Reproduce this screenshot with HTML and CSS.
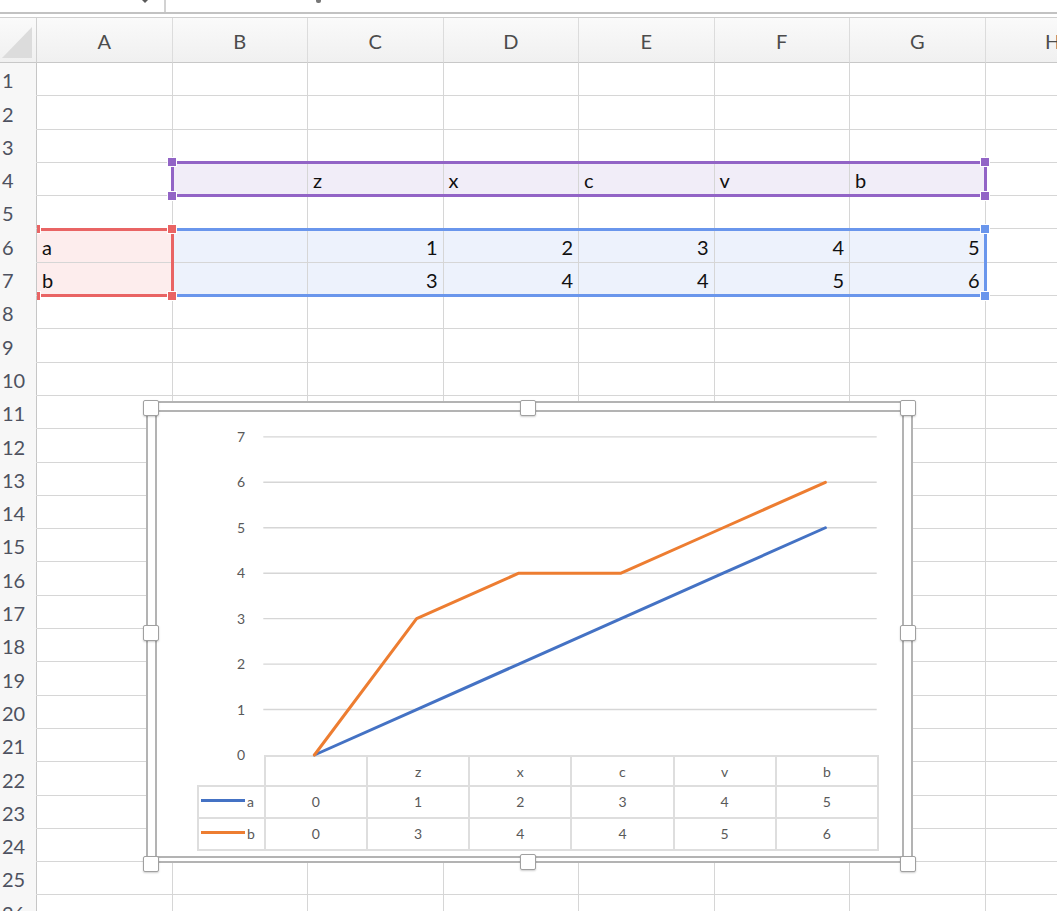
FILE: index.html
```html
<!DOCTYPE html>
<html lang="en">

<head>
    <meta charset="UTF-8">
    <meta name="viewport" content="width=device-width, initial-scale=1.0">
    <title>Sheet1 - Chart</title>
    <link rel="stylesheet" href="styles.css">
</head>

<body>
    <div class="toolbar">
        <div class="namebox"><span class="drop"></span></div>
        <div class="formula"><span class="fx"></span></div>
    </div>

    <div class="sheet">
        <div class="grid">
            <div class="corner"><span class="tri"></span></div><div class="ch">A</div><div class="ch">B</div><div class="ch">C</div><div class="ch">D</div><div class="ch">E</div><div class="ch">F</div><div class="ch">G</div><div class="ch">H</div>
            <div class="rh">1</div><div></div><div></div><div></div><div></div><div></div><div></div><div></div><div></div>
            <div class="rh">2</div><div></div><div></div><div></div><div></div><div></div><div></div><div></div><div></div>
            <div class="rh">3</div><div></div><div></div><div></div><div></div><div></div><div></div><div></div><div></div>
            <div class="rh">4</div><div></div><div class="fp"></div><div class="fp">z</div><div class="fp">x</div><div class="fp">c</div><div class="fp">v</div><div class="fp">b</div><div></div>
            <div class="rh">5</div><div></div><div></div><div></div><div></div><div></div><div></div><div></div><div></div>
            <div class="rh">6</div><div class="fr">a</div><div class="fb"></div><div class="fb n">1</div><div class="fb n">2</div><div class="fb n">3</div><div class="fb n">4</div><div class="fb n">5</div><div></div>
            <div class="rh">7</div><div class="fr">b</div><div class="fb"></div><div class="fb n">3</div><div class="fb n">4</div><div class="fb n">4</div><div class="fb n">5</div><div class="fb n">6</div><div></div>
            <div class="rh">8</div><div></div><div></div><div></div><div></div><div></div><div></div><div></div><div></div>
            <div class="rh">9</div><div></div><div></div><div></div><div></div><div></div><div></div><div></div><div></div>
            <div class="rh">10</div><div></div><div></div><div></div><div></div><div></div><div></div><div></div><div></div>
            <div class="rh">11</div><div></div><div></div><div></div><div></div><div></div><div></div><div></div><div></div>
            <div class="rh">12</div><div></div><div></div><div></div><div></div><div></div><div></div><div></div><div></div>
            <div class="rh">13</div><div></div><div></div><div></div><div></div><div></div><div></div><div></div><div></div>
            <div class="rh">14</div><div></div><div></div><div></div><div></div><div></div><div></div><div></div><div></div>
            <div class="rh">15</div><div></div><div></div><div></div><div></div><div></div><div></div><div></div><div></div>
            <div class="rh">16</div><div></div><div></div><div></div><div></div><div></div><div></div><div></div><div></div>
            <div class="rh">17</div><div></div><div></div><div></div><div></div><div></div><div></div><div></div><div></div>
            <div class="rh">18</div><div></div><div></div><div></div><div></div><div></div><div></div><div></div><div></div>
            <div class="rh">19</div><div></div><div></div><div></div><div></div><div></div><div></div><div></div><div></div>
            <div class="rh">20</div><div></div><div></div><div></div><div></div><div></div><div></div><div></div><div></div>
            <div class="rh">21</div><div></div><div></div><div></div><div></div><div></div><div></div><div></div><div></div>
            <div class="rh">22</div><div></div><div></div><div></div><div></div><div></div><div></div><div></div><div></div>
            <div class="rh">23</div><div></div><div></div><div></div><div></div><div></div><div></div><div></div><div></div>
            <div class="rh">24</div><div></div><div></div><div></div><div></div><div></div><div></div><div></div><div></div>
            <div class="rh">25</div><div></div><div></div><div></div><div></div><div></div><div></div><div></div><div></div>
            <div class="rh">26</div><div></div><div></div><div></div><div></div><div></div><div></div><div></div><div></div>
        </div>

        <!-- range highlights for the chart source -->
        <div class="ranges">
            <div class="rng purple" style="left: 133.5px; top: 97.9px; width: 816px; height: 36.3px;">
                <span class="hd tl"></span><span class="hd tr"></span><span class="hd bl"></span><span class="hd br"></span>
            </div>
            <div class="rng blue" style="left: 133.5px; top: 164.5px; width: 816px; height: 69.6px;">
                <span class="hd tr"></span><span class="hd br"></span>
            </div>
            <div class="rng red" style="left: -3px; top: 164.5px; width: 139.5px; height: 69.6px;">
                <span class="hd tl"></span><span class="hd tr"></span><span class="hd bl"></span><span class="hd br"></span>
            </div>
        </div>

        <div class="chart">
            <div class="chart-body">
                <svg class="plot" width="745" height="343" viewBox="0 0 745 343">
                    <g class="gridlines">
                        <line x1="106.3" y1="297.55" x2="719.7" y2="297.55" />
                        <line x1="106.3" y1="252.1" x2="719.7" y2="252.1" />
                        <line x1="106.3" y1="206.65" x2="719.7" y2="206.65" />
                        <line x1="106.3" y1="161.2" x2="719.7" y2="161.2" />
                        <line x1="106.3" y1="115.75" x2="719.7" y2="115.75" />
                        <line x1="106.3" y1="70.3" x2="719.7" y2="70.3" />
                        <line x1="106.3" y1="24.85" x2="719.7" y2="24.85" />
                    </g>
                    <g class="ax">
                        <text x="84" y="348">0</text>
                        <text x="84" y="302.5">1</text>
                        <text x="84" y="257">2</text>
                        <text x="84" y="211.5">3</text>
                        <text x="84" y="166">4</text>
                        <text x="84" y="120.5">5</text>
                        <text x="84" y="75">6</text>
                        <text x="84" y="29.5">7</text>
                    </g>
                    <polyline class="series-a" points="157.4,343 259.6,297.55 361.8,252.1 464,206.65 566.2,161.2 668.4,115.75" />
                    <polyline class="series-b" points="157.4,343 259.6,206.65 361.8,161.2 464,161.2 566.2,115.75 668.4,70.3" />
                </svg>
                <table class="dt">
                    <colgroup>
                        <col class="c-key"><col><col><col><col><col><col>
                    </colgroup>
                    <tr class="r-head">
                        <td class="blank"></td><td></td><td>z</td><td>x</td><td>c</td><td>v</td><td>b</td>
                    </tr>
                    <tr class="r-a">
                        <td class="key"><span class="swatch blue"></span>a</td><td>0</td><td>1</td><td>2</td><td>3</td><td>4</td><td>5</td>
                    </tr>
                    <tr class="r-b">
                        <td class="key"><span class="swatch orange"></span>b</td><td>0</td><td>3</td><td>4</td><td>4</td><td>5</td><td>6</td>
                    </tr>
                </table>
            </div>
            <span class="ho" style="left: -5.5px; top: -3.5px;"></span>
            <span class="ho" style="left: 372px; top: -3.5px;"></span>
            <span class="ho" style="left: 752px; top: -3.5px;"></span>
            <span class="ho" style="left: -5.5px; top: 222px;"></span>
            <span class="ho" style="left: 752px; top: 222px;"></span>
            <span class="ho" style="left: -5.5px; top: 453px;"></span>
            <span class="ho" style="left: 372px; top: 451px;"></span>
            <span class="ho" style="left: 752px; top: 453px;"></span>
        </div>
    </div>
</body>

</html>
```

FILE: styles.css
```css
* {
    margin: 0;
    padding: 0;
    box-sizing: border-box;
}

html,
body {
    overflow: hidden;
    background: #fff;
    font-family: Lato, "Open Sans", sans-serif;
}

/* top strip (name box + formula bar, cut off) */
.toolbar {
    display: flex;
    height: 14px;
    border-bottom: 2px solid #c2c2c2;
}

.namebox {
    display: flex;
    width: 166px;
    border-right: 2px solid #d2d2d2;
}

.drop {
    margin-left: auto;
    margin-right: 16px;
    width: 0;
    height: 0;
    border-top: 3px solid #5a5a5a;
    border-left: 3px solid transparent;
    border-right: 3px solid transparent;
}

.formula {
    flex: 1;
}

.fx {
    display: block;
    margin-left: 150px;
    width: 5px;
    height: 3px;
    background: #777;
    border-radius: 0 0 2px 2px;
}

/* sheet */
.sheet {
    position: relative;
    margin-top: 3px;
    border-top: 1px solid #cfcfcf;
}

.grid {
    display: grid;
    grid-template-columns: 37px repeat(8, 135.5px);
    grid-template-rows: 45px repeat(26, 33.3px);
    font-size: 20px;
}

.grid > div {
    display: flex;
    align-items: flex-end;
    padding: 0 5px 3px;
    border-right: 1px solid #d6d6d6;
    border-bottom: 1px solid #d6d6d6;
    color: #111;
    white-space: nowrap;
    overflow: hidden;
}

.grid > .n {
    justify-content: flex-end;
}

.grid > .corner {
    position: relative;
    padding: 0;
    background: linear-gradient(#fafafa, #f0f0f0);
    border-bottom-color: #c8c8c8;
    border-right-color: #d0d0d0;
}

.tri {
    position: absolute;
    left: 2px;
    top: 9px;
    width: 30px;
    height: 31px;
    background: #dcdcdc;
    clip-path: polygon(100% 0, 100% 100%, 0 100%);
}

.grid > .ch {
    align-items: center;
    justify-content: center;
    padding: 2px 0 0;
    background: linear-gradient(#fafafa, #f0f0f0);
    border-right-color: #dcdcdc;
    border-bottom-color: #c8c8c8;
    color: #4c4c4c;
}

.grid > .rh {
    padding: 0 0 3px 2px;
    background: #f7f7f7;
    border-right-color: #c6c6c6;
    border-bottom-color: #f7f7f7;
    color: #4e5260;
}

.grid > .fp {
    background: #f1edf8;
}

.grid > .fr {
    background: #fdeded;
}

.grid > .fb {
    background: #edf2fc;
}

/* coloured range borders */
.ranges {
    position: absolute;
    left: 37px;
    top: 45px;
    right: 0;
    bottom: 0;
    overflow: hidden;
    pointer-events: none;
}

.rng {
    position: absolute;
    border: 3px solid currentColor;
}

.purple {
    color: #9264c6;
}

.blue {
    color: #6a96ec;
}

.red {
    color: #e96464;
}

.hd {
    position: absolute;
    width: 10px;
    height: 10px;
    border: 1px solid #fff;
    background: currentColor;
}

.hd.tl { left: -6.5px; top: -6.5px; }
.hd.tr { right: -6.5px; top: -6.5px; }
.hd.bl { left: -6.5px; bottom: -6.5px; }
.hd.br { right: -6.5px; bottom: -6.5px; }

/* chart object */
.chart {
    position: absolute;
    left: 146px;
    top: 383px;
    width: 767px;
    height: 462px;
    padding: 7px 7px 3px;
    border: 2px solid #b3b3b3;
    background: #fff;
}

.chart-body {
    height: 100%;
    border: 2px solid #b3b3b3;
    background: #fff;
}

.ho {
    position: absolute;
    width: 16px;
    height: 16px;
    border: 1px solid #a0a0a0;
    border-radius: 2px;
    background: #fff;
    box-shadow: 0 1px 2px rgba(0, 0, 0, 0.2);
}

.plot {
    display: block;
    overflow: visible;
}

.gridlines line {
    stroke: #d6d6d6;
    stroke-width: 1.4;
}

.ax text {
    font-family: Lato, "Open Sans", sans-serif;
    font-size: 14px;
    fill: #595959;
    text-anchor: middle;
}

.series-a,
.series-b {
    fill: none;
    stroke-width: 3;
    stroke-linejoin: round;
    stroke-linecap: round;
}

.series-a {
    stroke: #4472c4;
}

.series-b {
    stroke: #ed7d31;
}

/* data table under the plot */
.dt {
    margin-left: 40px;
    width: 680px;
    table-layout: fixed;
    border-collapse: collapse;
    font-size: 14px;
    color: #595959;
}

.dt col {
    width: 102.2px;
}

.dt .c-key {
    width: 66.8px;
}

.dt td {
    border: 2px solid #dedede;
    text-align: center;
    padding: 0;
}

.dt td.blank {
    border: none;
}

.r-head td {
    height: 30px;
}

.r-a td {
    height: 31.5px;
}

.r-b td {
    height: 32px;
}

.dt td.key {
    text-align: left;
    padding-left: 2px;
    white-space: nowrap;
}

.swatch {
    display: inline-block;
    width: 44px;
    height: 3px;
    margin-right: 2px;
    vertical-align: 5px;
}

.swatch.blue {
    background: #4472c4;
}

.swatch.orange {
    background: #ed7d31;
}
```
